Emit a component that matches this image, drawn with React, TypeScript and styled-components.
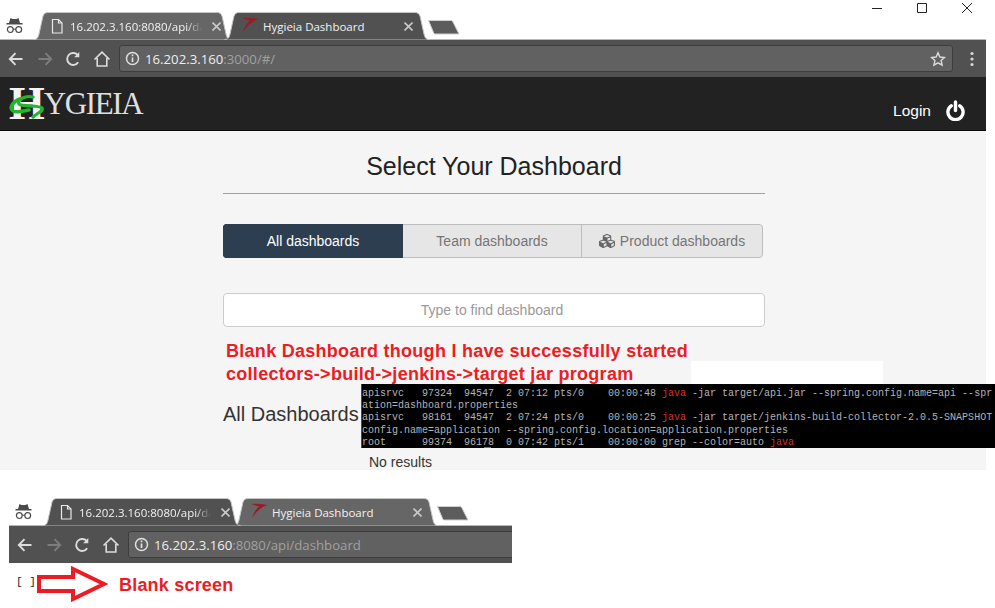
import React from "react";
import styled, { createGlobalStyle } from "styled-components";
import { FaCubes } from "react-icons/fa";

const Global = createGlobalStyle`
  html, body { margin: 0; padding: 0; background: #fff; }
  * { box-sizing: border-box; }
  #root { width: 995px; height: 608px; overflow: hidden; }
`;

const Page = styled.div`
  position: relative;
  width: 995px;
  height: 608px;
  overflow: hidden;
  background: #fff;
  font-family: "Liberation Sans", Arial, sans-serif;
`;

const Window = styled.div<{ $width: number; $left: number; $top: number }>`
  width: ${(p) => p.$width}px;
  margin-left: ${(p) => p.$left}px;
  margin-top: ${(p) => p.$top}px;
  overflow: hidden;
`;

const Strip = styled.div`
  display: flex;
  align-items: flex-end;
  height: 40px;
  padding-left: 6px;
  width: 100%;
`;

const Incognito = styled.svg`
  flex: none;
  width: 17px;
  height: 17px;
  margin-right: 10px;
  margin-bottom: 6px;
`;

const TabBox = styled.div<{ $width: number; $front: boolean; $first: boolean }>`
  position: relative;
  flex: none;
  display: flex;
  align-items: center;
  width: ${(p) => p.$width}px;
  height: 28px;
  margin-left: ${(p) => (p.$first ? 0 : -8)}px;
  padding: 0 ${(p) => (p.$first ? 11 : 17)}px 0 ${(p) => (p.$first ? 15 : 17)}px;
  z-index: ${(p) => (p.$front ? 2 : 1)};
  font-family: "Open Sans", "Noto Sans", sans-serif;
  font-size: 11.5px;
  color: #f2f2f2;
`;

const TabShape = styled.svg`
  position: absolute;
  left: 0;
  top: 0;
  z-index: -1;
`;

const TabIcon = styled.svg`
  flex: none;
  width: 18px;
  height: 18px;
  margin-right: 4px;
`;

const TabTitle = styled.span<{ $fade: boolean }>`
  flex: 1;
  min-width: 0;
  overflow: hidden;
  white-space: nowrap;
  ${(p) =>
    p.$fade
      ? "mask-image: linear-gradient(to right, #000 88%, transparent 100%);"
      : ""}
`;

const TabClose = styled.svg`
  flex: none;
  width: 9px;
  height: 9px;
  margin-left: 10px;
`;

const NewTab = styled.svg`
  flex: none;
  width: 36px;
  height: 17px;
  margin-left: -3px;
  margin-bottom: 4px;
`;

const Controls = styled.div`
  display: flex;
  align-self: flex-start;
  gap: 35px;
  margin-left: auto;
  margin-top: 3px;
  margin-right: 14px;
`;

const ControlIcon = styled.svg`
  display: block;
  width: 10px;
  height: 10px;
`;

const Toolbar = styled.div`
  display: flex;
  align-items: center;
  height: 38px;
  padding: 0 0 0 7px;
  background: #515151;
  border-top: 1px solid #b9b9b9;
  margin-top: -1px;
`;

const NavButton = styled.svg`
  flex: none;
  width: 18px;
  height: 18px;
  margin-right: 10.5px;
`;

const UrlBox = styled.div<{ $open: boolean }>`
  flex: 1;
  min-width: 0;
  display: flex;
  align-items: center;
  height: 27px;
  margin-left: -2px;
  margin-right: ${(p) => (p.$open ? -8 : 0)}px;
  padding: 0 6px 0 5px;
  background: #616161;
  border: 1px solid #3d3d3d;
  border-radius: 3px;
  font-family: "Open Sans", "Noto Sans", sans-serif;
  font-size: 13.2px;
  white-space: nowrap;
  overflow: hidden;
`;

const InfoIcon = styled.svg`
  flex: none;
  width: 15px;
  height: 15px;
  margin-right: 5px;
`;

const Host = styled.span`
  color: #eeeeee;
`;

const Rest = styled.span`
  color: #a0a0a0;
`;

const Star = styled.svg`
  flex: none;
  width: 16px;
  height: 16px;
  margin-left: auto;
`;

const Menu = styled.svg`
  flex: none;
  width: 4px;
  height: 16px;
  margin: 0 12px 0 17px;
`;

const NavBar = styled.header`
  display: flex;
  align-items: center;
  justify-content: space-between;
  width: 986px;
  height: 54px;
  padding: 0 21px 0 9px;
  background: #222;
  border-bottom: 1px solid #0a0a0a;
`;

const Logo = styled.div`
  position: relative;
  display: flex;
  align-items: center;
  font-family: "Liberation Serif", serif;
  color: #e0e0e0;
  font-size: 31px;
  letter-spacing: -1.4px;
  line-height: 34px;
`;

const LogoCap = styled.span`
  font-size: 46px;
  font-weight: bold;
  letter-spacing: 0;
  color: #f4f4f4;
  margin-right: -1px;
`;

const Snake = styled.svg`
  position: absolute;
  left: 0;
  top: 7px;
  width: 36px;
  height: 26px;
`;

const Login = styled.div`
  display: flex;
  align-items: center;
  gap: 15px;
  margin-top: 14px;
  color: #fff;
  font-size: 15.5px;
`;

const PowerIcon = styled.svg`
  width: 19px;
  height: 21px;
`;

const Content = styled.main`
  display: flex;
  justify-content: center;
  width: 986px;
  height: 339px;
  padding-left: 2px;
  background: #f5f5f5;
`;

const Column = styled.div`
  width: 542px;
  padding-top: 18px;
`;

const Title = styled.h1`
  margin: 0 0 10px;
  font-size: 25px;
  line-height: 34px;
  font-weight: normal;
  text-align: center;
  color: #222;
`;

const Rule = styled.hr`
  margin: 0 0 30px;
  border: 0;
  border-top: 1px solid #a0a0a0;
`;

const Segments = styled.div`
  display: flex;
  width: 540px;
  height: 34px;
  border-radius: 4px;
  overflow: hidden;
  margin-bottom: 35px;
`;

const Segment = styled.div<{ $active?: boolean; $width: number }>`
  display: flex;
  align-items: center;
  justify-content: center;
  gap: 5px;
  width: ${(p) => p.$width}px;
  font-size: 14px;
  background: ${(p) => (p.$active ? "#2c3e50" : "#e6e6e6")};
  color: ${(p) => (p.$active ? "#fff" : "#757575")};
  border: 1px solid ${(p) => (p.$active ? "#2c3e50" : "#bdbdbd")};
  border-left-width: ${(p) => (p.$active ? 1 : 0)}px;
  &:last-child {
    border-radius: 0 4px 4px 0;
  }
`;

const SearchInput = styled.input`
  display: block;
  width: 542px;
  height: 34px;
  padding: 0 16px 0 12px;
  background: #fff;
  border: 1px solid #ccc;
  border-radius: 4px;
  font: 14px "Liberation Sans", Arial, sans-serif;
  text-align: center;
  &::placeholder {
    color: #999;
    opacity: 1;
  }
`;

const Note = styled.p`
  margin: 13px 0 14px 3px;
  font-size: 18px;
  font-weight: bold;
  line-height: 23px;
  letter-spacing: 0.28px;
  color: #ed1c24;
  white-space: nowrap;
`;

const Heading = styled.h2`
  margin: 0 0 24px;
  font-size: 20px;
  line-height: 28px;
  font-weight: normal;
  color: #333;
`;

const Empty = styled.p`
  margin: 0 0 0 146px;
  font-size: 14px;
  line-height: 20px;
  color: #333;
`;

const WhitePatch = styled.div`
  position: absolute;
  left: 691px;
  top: 361px;
  width: 192px;
  height: 23px;
  background: #fff;
`;

const Terminal = styled.pre`
  position: absolute;
  left: 361px;
  top: 384px;
  width: 634px;
  height: 64px;
  margin: 0;
  padding: 4px 0 0 0;
  overflow: hidden;
  background: #000;
  border-left: 1px solid #27527d;
  color: #b4b4b4;
  font: 10px/12.2px "Liberation Mono", monospace;
  &::after {
    content: "";
    position: absolute;
    left: 122px;
    bottom: 0;
    width: 7px;
    height: 1px;
    background: #1fae3a;
  }
`;

const Match = styled.span`
  color: #d8302e;
`;

const Response = styled.div`
  display: flex;
  align-items: center;
  height: 35px;
  margin-top: 3px;
  padding-left: 16px;
`;

const Json = styled.span`
  flex: none;
  width: 21px;
  margin-bottom: 3px;
  font: 11px "Liberation Mono", monospace;
  color: #222;
  white-space: nowrap;
`;

const Arrow = styled.svg`
  flex: none;
  width: 71px;
  height: 36px;
  margin-right: 11px;
`;

const BlankNote = styled.span`
  margin-top: 4px;
  font-size: 18px;
  font-weight: bold;
  letter-spacing: 0.2px;
  color: #ed1c24;
`;

const tabPath = (w: number) =>
  `M0.5 27.5 C4 27.5 5 26 6 22 L10 4 C11 1.5 12.5 0.5 15 0.5 L${w - 15} 0.5 C${w - 12.5} 0.5 ${w - 11} 1.5 ${w - 10} 4 L${w - 6} 22 C${w - 5} 26 ${w - 4} 27.5 ${w - 0.5} 27.5`;

const FileGlyph = () => (
  <TabIcon viewBox="0 0 18 18" fill="none" stroke="#e8e8e8" strokeWidth="1.2">
    <path d="M4.5 2.5h6l3.5 3.5v10h-9.5z" />
    <path d="M10.5 2.5v3.5h3.5" />
  </TabIcon>
);

const RedGlyph = () => (
  <TabIcon viewBox="0 0 18 18">
    <path d="M1 1 C6 0.5 12 1 17.5 2 C11 4 7 8 2 15 C4 9 6 6 9 3.5 C6 2.5 4 2 1 1z" fill="#9b1c24" />
  </TabIcon>
);

const CloseGlyph = () => (
  <TabClose viewBox="0 0 9 9" stroke="#c9c9c9" strokeWidth="1.6">
    <path d="M0.5 0.5l8 8M8.5 0.5l-8 8" />
  </TabClose>
);

type TabProps = {
  width: number;
  title: string;
  active: boolean;
  first: boolean;
  fade: boolean;
  icon: React.ReactNode;
};

const Tab = ({ width, title, active, first, fade, icon }: TabProps) => (
  <TabBox $width={width} $front={active} $first={first}>
    <TabShape width={width} height={28} viewBox={`0 0 ${width} 28`}>
      <path d={tabPath(width)} fill={active ? "#515151" : "#666"} stroke="#c4c4c4" strokeWidth="1" />
    </TabShape>
    {icon}
    <TabTitle $fade={fade}>{title}</TabTitle>
    <CloseGlyph />
  </TabBox>
);

const BackIcon = () => (
  <NavButton viewBox="0 0 18 18" fill="none" stroke="#dcdcdc" strokeWidth="1.9">
    <path d="M15.5 9H3M8.5 3.2L2.8 9l5.7 5.8" />
  </NavButton>
);
const ForwardIcon = () => (
  <NavButton viewBox="0 0 18 18" fill="none" stroke="#7d7d7d" strokeWidth="1.9">
    <path d="M2.5 9H15M9.5 3.2L15.2 9l-5.7 5.8" />
  </NavButton>
);
const ReloadIcon = () => (
  <NavButton viewBox="0 0 18 18" fill="none" stroke="#dcdcdc" strokeWidth="1.9">
    <path d="M14.2 12.2A6 6 0 1 1 14 5.4" />
    <path d="M15.3 2v5.2h-5.2z" fill="#dcdcdc" stroke="none" />
  </NavButton>
);
const HomeIcon = () => (
  <NavButton viewBox="0 0 18 18" fill="none" stroke="#dcdcdc" strokeWidth="1.6">
    <path d="M1.5 9.5L9 2.2l7.5 7.3M4.2 8v8h9.6V8" />
  </NavButton>
);

const Browser = ({
  width,
  left,
  top,
  active,
  port,
  path,
  children,
}: {
  width: number;
  left: number;
  top: number;
  active: number;
  port: string;
  path: string;
  children?: React.ReactNode;
}) => (
  <Window $width={width} $left={left} $top={top}>
    <Strip>
      <Incognito viewBox="0 0 17 17" fill="#4a4a4a">
        <path d="M4.5 1l2 1h4l2-1 1.5 5h2.5v1.4H.5V6H3z" />
        <circle cx="4.3" cy="12.6" r="2.9" fill="none" stroke="#4a4a4a" strokeWidth="1.2" />
        <circle cx="12.7" cy="12.6" r="2.9" fill="none" stroke="#4a4a4a" strokeWidth="1.2" />
        <path d="M7 12.2h3" stroke="#4a4a4a" strokeWidth="1" />
      </Incognito>
      <Tab width={199} title="16.202.3.160:8080/api/dashboard" active={active === 0} first fade icon={<FileGlyph />} />
      <Tab width={206} title="Hygieia Dashboard" active={active === 1} first={false} fade={false} icon={<RedGlyph />} />
      <NewTab viewBox="0 0 36 17">
        <path d="M1.5 1.5h22c1.5 0 2 .5 2.5 1.5l6 12H8.5c-1 0-1.5-.5-2-1.5z" fill="#5c5c5c" stroke="#cfcfcf" strokeWidth="1" />
      </NewTab>
      {children}
    </Strip>
    <Toolbar>
      <BackIcon />
      <ForwardIcon />
      <ReloadIcon />
      <HomeIcon />
      <UrlBox $open={port !== "3000"}>
        <InfoIcon viewBox="0 0 15 15" fill="none" stroke="#e0e0e0" strokeWidth="1.5">
          <circle cx="7.5" cy="7.5" r="6" />
          <path d="M7.5 6.5v4.5M7.5 3.6v1.6" strokeWidth="1.7" />
        </InfoIcon>
        <Host>16.202.3.160</Host>
        <Rest>
          :{port}
          {path}
        </Rest>
        {port === "3000" && (
          <Star viewBox="0 0 16 16" fill="none" stroke="#dcdcdc" strokeWidth="1.4">
            <path d="M8 1.8l1.9 4.2 4.6.5-3.4 3.1 1 4.5L8 11.8l-4.1 2.3 1-4.5L1.5 6.5l4.6-.5z" />
          </Star>
        )}
      </UrlBox>
      {port === "3000" && (
        <Menu viewBox="0 0 4 16" fill="#d8d8d8">
          <circle cx="2" cy="2.5" r="1.6" />
          <circle cx="2" cy="8" r="1.6" />
          <circle cx="2" cy="13.5" r="1.6" />
        </Menu>
      )}
    </Toolbar>
  </Window>
);

export default function App() {
  return (
    <Page>
      <Global />
      <Browser width={986} left={0} top={0} active={1} port="3000" path="/#/">
        <Controls>
          <ControlIcon viewBox="0 0 10 10" stroke="#222" fill="none">
            <path d="M0 5.5h10" />
          </ControlIcon>
          <ControlIcon viewBox="0 0 10 10" stroke="#222" fill="none">
            <path d="M.5.5h9v9h-9z" />
          </ControlIcon>
          <ControlIcon viewBox="0 0 10 10" stroke="#222" fill="none">
            <path d="M0 0l10 10M10 0L0 10" />
          </ControlIcon>
        </Controls>
      </Browser>
      <NavBar>
        <Logo>
          <LogoCap>H</LogoCap>YGIEIA
          <Snake viewBox="0 0 36 26" fill="none" stroke="#22b52e" strokeLinecap="round">
            <path d="M24 3C16 1 8 6 10 10C12 13 30 11 33 14C35 17 28 19 24 23" strokeWidth="3.2" />
            <path d="M11 5C3 8 0 14 4 17C8 19 14 17 20 16" strokeWidth="3.6" />
          </Snake>
        </Logo>
        <Login>
          Login
          <PowerIcon viewBox="0 0 19 21" fill="none" stroke="#fff" strokeWidth="3.4" strokeLinecap="round">
            <path d="M5.2 5.8a7.6 7.6 0 1 0 8.6 0" />
            <path d="M9.5 2v8.5" />
          </PowerIcon>
        </Login>
      </NavBar>
      <Content>
        <Column>
          <Title>Select Your Dashboard</Title>
          <Rule />
          <Segments>
            <Segment $active $width={180}>All dashboards</Segment>
            <Segment $width={179}>Team dashboards</Segment>
            <Segment $width={181}>
              <FaCubes size={16} color="#666" />
              Product dashboards
            </Segment>
          </Segments>
          <SearchInput placeholder="Type to find dashboard" readOnly />
          <Note>
            Blank Dashboard though I have successfully started
            <br />
            collectors-&gt;build-&gt;jenkins-&gt;target jar program
          </Note>
          <Heading>All Dashboards</Heading>
          <Empty>No results</Empty>
        </Column>
      </Content>
      <WhitePatch />
      <Terminal>
        {"apisrvc   97324  94547  2 07:12 pts/0    00:00:48 "}
        <Match>java</Match>
        {" -jar target/api.jar --spring.config.name=api --spr\n"}
        {"ation=dashboard.properties\n"}
        {"apisrvc   98161  94547  2 07:24 pts/0    00:00:25 "}
        <Match>java</Match>
        {" -jar target/jenkins-build-collector-2.0.5-SNAPSHOT\n"}
        {"config.name=application --spring.config.location=application.properties\n"}
        {"root      99374  96178  0 07:42 pts/1    00:00:00 grep --color=auto "}
        <Match>java</Match>
      </Terminal>
      <Browser width={503} left={9} top={16} active={0} port="8080" path="/api/dashboard" />
      <Response>
        <Json>[ ]</Json>
        <Arrow viewBox="0 0 71 36" fill="none" stroke="#ed1c24" strokeWidth="4">
          <path d="M2 11h34V3l31 15-31 15v-8H2z" />
        </Arrow>
        <BlankNote>Blank screen</BlankNote>
      </Response>
    </Page>
  );
}
